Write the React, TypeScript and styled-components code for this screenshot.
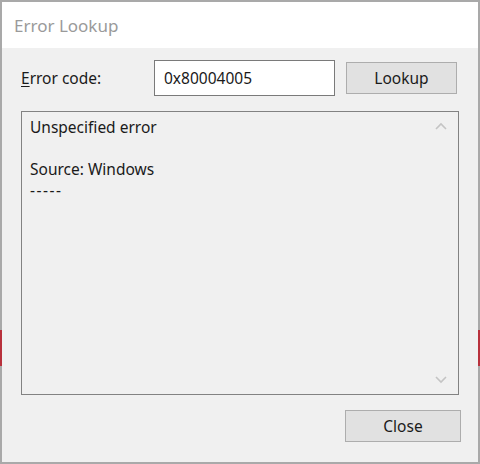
import { createGlobalStyle } from "styled-components";
import styled from "styled-components";

const GlobalStyle = createGlobalStyle`
  html, body {
    margin: 0;
    padding: 0;
    width: 480px;
    height: 464px;
    overflow: hidden;
  }
  body {
    background: linear-gradient(
      to bottom,
      #a9a9a9 0px,
      #a9a9a9 330px,
      #b8313c 330px,
      #b8313c 366px,
      #a9a9a9 366px
    );
    font-family: "Noto Sans", "Open Sans", sans-serif;
  }
`;

const Window = styled.div`
  box-sizing: border-box;
  margin: 2px 2px 0 2px;
  width: 476px;
  height: 460px;
  display: flex;
  flex-direction: column;
  background: #f0f0f0;
`;

const TitleBar = styled.div`
  height: 46px;
  flex-shrink: 0;
  display: flex;
  align-items: center;
  padding-left: 12px;
  background: #ffffff;
  color: #9a9a9a;
  font-size: 17px;
`;

const Body = styled.div`
  flex: 1;
  display: flex;
  flex-direction: column;
  padding: 12px 17px 18px 19px;
`;

const CodeRow = styled.div`
  display: flex;
  align-items: center;
  height: 36px;
`;

const Label = styled.label`
  width: 133px;
  font-size: 15.5px;
  color: #1a1a1a;

  u {
    text-decoration: underline;
    text-underline-offset: 2px;
  }
`;

const CodeInput = styled.input`
  box-sizing: border-box;
  width: 181px;
  height: 36px;
  padding: 0 9px;
  border: 1px solid #7a7a7a;
  background: #ffffff;
  font-family: inherit;
  font-size: 15.5px;
  color: #1a1a1a;
  outline: none;
`;

const Button = styled.button<{ $width: number }>`
  box-sizing: border-box;
  width: ${({ $width }) => $width}px;
  height: 32px;
  border: 1px solid #adadad;
  background: #e1e1e1;
  font-family: inherit;
  font-size: 15.5px;
  color: #1a1a1a;
  padding: 0;
`;

const LookupButton = styled(Button)`
  margin-left: 11px;
`;

const Output = styled.div`
  box-sizing: border-box;
  margin-top: 15px;
  width: 438px;
  height: 284px;
  border: 1px solid #828282;
  display: flex;
`;

const OutputText = styled.div`
  flex: 1;
  padding: 5px 8px;
  font-size: 15.5px;
  line-height: 21px;
  color: #1a1a1a;
  white-space: pre;
`;

const Dashes = styled.span`
  letter-spacing: 1.5px;
`;

const ScrollBar = styled.div`
  width: 34px;
  display: flex;
  flex-direction: column;
  justify-content: space-between;
  align-items: center;
  padding: 10px 0;
  color: #c4c4c4;
`;

const Footer = styled.div`
  display: flex;
  justify-content: flex-end;
  margin-top: 15px;
`;

function Chevron({ up }: { up?: boolean }) {
  return (
    <svg width="12" height="8" viewBox="0 0 12 8">
      <path
        d={up ? "M1 7 L6 2 L11 7" : "M1 1 L6 6 L11 1"}
        fill="none"
        stroke="currentColor"
        strokeWidth="1.6"
      />
    </svg>
  );
}

export default function App() {
  return (
    <>
      <GlobalStyle />
      <Window>
        <TitleBar>Error Lookup</TitleBar>
        <Body>
          <CodeRow>
            <Label htmlFor="code">
              <u>E</u>rror code:
            </Label>
            <CodeInput id="code" defaultValue="0x80004005" readOnly />
            <LookupButton $width={111}>Lookup</LookupButton>
          </CodeRow>
          <Output>
            <OutputText>
              {"Unspecified error\n\nSource: Windows\n"}
              <Dashes>-----</Dashes>
            </OutputText>
            <ScrollBar>
              <Chevron up />
              <Chevron />
            </ScrollBar>
          </Output>
          <Footer>
            <Button $width={116}>Close</Button>
          </Footer>
        </Body>
      </Window>
    </>
  );
}
